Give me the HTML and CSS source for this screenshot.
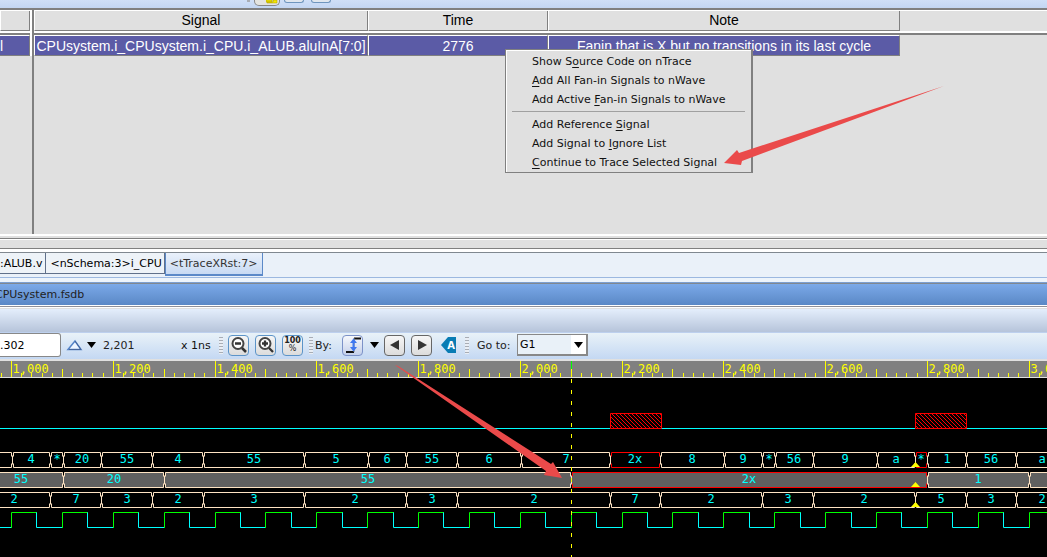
FILE: index.html
```html
<!DOCTYPE html>
<html lang="en">
<head>
  <meta charset="UTF-8" />
  <meta name="viewport" content="width=device-width, initial-scale=1.0" />
  <title>nWave - CPUsystem.fsdb</title>
  <link rel="stylesheet" href="styles.css">
</head>
<body>
  <div class="app">
    <!-- Trace results -->
    <div class="top-toolbar">
      <span class="top-grip"></span>
      <span class="top-tool gold"><svg width="12" height="4"><path d="M0 0h6v2H0zM7 0h4v3H1V2h6z" fill="#f4e800" stroke="#a89a00" stroke-width="0.5" /></svg></span>
      <span class="top-tool"></span>
      <span class="top-tool"></span>
    </div>

    <div class="results">
      <div class="pane pane-left">
        <table>
          <thead><tr><th><span class="cell"></span></th></tr></thead>
          <tbody><tr><td class="clipped">l</td></tr></tbody>
        </table>
      </div>
      <div class="pane pane-right">
        <table>
          <colgroup>
            <col class="col-signal"><col class="col-time"><col class="col-note"><col>
          </colgroup>
          <thead>
            <tr>
              <th><span class="cell">Signal</span></th>
              <th><span class="cell">Time</span></th>
              <th><span class="cell">Note</span></th>
              <th class="filler"><span class="cell"></span></th>
            </tr>
          </thead>
          <tbody>
            <tr>
              <td>CPUsystem.i_CPUsystem.i_CPU.i_ALUB.aluInA[7:0]</td>
              <td>2776</td>
              <td>Fanin that is X but no transitions in its last cycle</td>
              <td class="filler"></td>
            </tr>
          </tbody>
        </table>
      </div>

      <div class="menu">
        <button>Show S<u>o</u>urce Code on nTrace</button>
        <button><u>A</u>dd All Fan-in Signals to nWave</button>
        <button>Add Active <u>F</u>an-in Signals to nWave</button>
        <hr>
        <button>Add Reference <u>S</u>ignal</button>
        <button>Add Signal to <u>I</u>gnore List</button>
        <button><u>C</u>ontinue to Trace Selected Signal</button>
      </div>
    </div>

    <div class="splitter"></div>

    <div class="tabs">
      <button class="tab">:ALUB.v</button>
      <button class="tab">&lt;nSchema:3&gt;i_CPU</button>
      <button class="tab active">&lt;tTraceXRst:7&gt;</button>
    </div>

    <!-- nWave window -->
    <div class="titlebar">CPUsystem.fsdb</div>
    <div class="menubar"></div>

    <div class="toolbar">
      <input class="time-input" type="text" value=".302" aria-label="Cursor time" />
      <svg class="delta" width="17" height="12"><path d="M2 10.500L9 2l6 8.500z" fill="#eef5ff" stroke="#5584c8" stroke-width="1.500" /><path d="M9 2l6 8.500H3" fill="none" stroke="#46649a" /></svg>
      <svg class="caret" width="9" height="6"><path d="M0 0h9L4.500 6z" /></svg>
      <span class="delta-value">2,201</span>
      <span class="unit">x 1ns</span>
      <span class="grip"></span>
      <div class="tools">
        <button class="tool" aria-label="Zoom out">
          <svg width="18" height="18"><circle cx="8" cy="7.500" r="5.500" fill="#fff" stroke="#444" stroke-width="2" /><path d="M5 7.500h6M12 12l4 4" stroke="#333" stroke-width="2.500" /></svg>
        </button>
        <button class="tool" aria-label="Zoom in">
          <svg width="18" height="18"><circle cx="8" cy="7.500" r="5.500" fill="#fff" stroke="#444" stroke-width="2" /><path d="M5 7.500h6M8 4.500v6M12 12l4 4" stroke="#333" stroke-width="2.300" /></svg>
        </button>
        <button class="tool full" aria-label="Zoom 100%"><b>100</b><span>%</span></button>
      </div>
      <span class="grip"></span>
      <span class="by">By:</span>
      <button class="tool edge" aria-label="Any edge">
        <svg width="18" height="18"><path d="M2 16h8M10 2.500h7" stroke="#111" stroke-width="2" /><path d="M10 2v14" stroke="#777" /><path d="M9.500 6v7" stroke="#3f78f0" stroke-width="2" /><path d="M9.500 2.500L13 7H6zM9.500 15.500L13 11H6z" fill="#3f78f0" /></svg>
      </button>
      <svg class="caret by-caret" width="9" height="6"><path d="M0 0h9L4.500 6z" /></svg>
      <div class="tools">
        <button class="tool dark" aria-label="Previous edge"><svg width="10" height="10"><path d="M9 0v10L0 5z" fill="#333" /></svg></button>
        <button class="tool dark" aria-label="Next edge"><svg width="10" height="10"><path d="M1 0v10l9-5z" fill="#333" /></svg></button>
      </div>
      <button class="marker" aria-label="Marker">
        <svg width="16" height="18"><path d="M7 1h8v16H7L0 9z" fill="#087cb4" /><text x="10" y="13" text-anchor="middle">A</text></svg>
      </button>
      <span class="grip"></span>
      <label class="goto" for="goto">Go to:</label>
      <div class="select">
        <select id="goto"><option>G1</option></select>
        <svg class="caret" width="9" height="6"><path d="M0 0h9L4.500 6z" /></svg>
      </div>
    </div>

    <svg id="ruler" class="ruler"></svg>
    <svg id="wave" class="wave"></svg>

    <svg class="arrows">
      <path d="M724 163L737 150L739 153L944 86L742 161L741 165z" />
      <path d="M395 365L398 366L551 464L553 462L562 478L544 475L546 471z" />
    </svg>
  </div>

  <script src="wave.js"></script>
</body>
</html>
```

FILE: styles.css
```css
* {
  box-sizing: border-box;
}
body {
  margin: 0;
  background: #000;
  font-family: "DejaVu Sans", sans-serif;
  font-size: 11px;
  color: #222;
}
button {
  font: inherit;
  color: inherit;
  padding: 0;
}
.app {
  position: relative;
  display: flex;
  flex-direction: column;
  height: 100vh;
  overflow: hidden;
}
.app > * {
  flex-shrink: 0;
}

/* trace results */
.top-toolbar {
  display: flex;
  align-items: flex-start;
  gap: 4px;
  height: 8px;
  padding-left: 247px;
  background: linear-gradient(#cfdff7, #c3d6f2);
}
.top-grip {
  width: 3px;
  height: 2px;
  background: #a8adb5;
}
.top-tool {
  width: 20px;
  height: 3px;
  margin-right: 3px;
  background: #dfe6ee;
  border: 1px solid #6f95bd;
  border-top: none;
  border-radius: 0 0 5px 5px;
}
.top-tool.gold {
  width: 26px;
  height: 6px;
  margin-right: 0;
  padding-left: 11px;
  background: #e4e4e0;
  border: 1px solid #888;
  border-top: none;
}
.top-tool svg {
  display: block;
}
.results {
  position: relative;
  display: flex;
  height: 228px;
  background: #e0e0e0;
  border-top: 2px solid #808080;
  border-bottom: 2px solid #fff;
}
.pane-left {
  width: 34px;
  border-right: 2px solid #808080;
}
.pane-right {
  flex: 1;
}
.pane table {
  width: 100%;
  table-layout: fixed;
  border-collapse: separate;
  border-spacing: 0;
  font: 14px/18px "Liberation Sans", sans-serif;
}
.pane-left table {
  border-right: 2px solid #fff;
}
.col-signal { width: 334px; }
.col-time { width: 180px; }
.col-note { width: 352px; }
.pane th {
  padding: 0 0 2px;
  background: #fff;
  border-top: 1px solid #fff;
  border-bottom: 2px solid #808080;
  font-weight: normal;
  color: #000;
}
.cell {
  display: block;
  height: 20px;
  background: #e0e0e0;
  border-left: 1px solid #fff;
  border-right: 1px solid #808080;
  border-bottom: 1px solid #808080;
}
.filler .cell {
  border-color: #e0e0e0;
}
.pane td {
  height: 21px;
  padding: 0;
  background: #5b5ba6;
  border-top: 1px solid #fff;
  border-left: 1px solid #fff;
  border-right: 1px solid #808080;
  border-bottom: 1px solid #808080;
  color: #fff;
  text-align: center;
  white-space: nowrap;
  overflow: hidden;
}
.pane td.filler {
  background: #e0e0e0;
  border-color: #e0e0e0;
}
.pane td.clipped {
  border-left: none;
  text-align: left;
}

.menu {
  position: absolute;
  left: 505px;
  top: 39px;
  display: flex;
  flex-direction: column;
  width: 248px;
  padding: 2px 2px 0;
  background: #e0e0e0;
  border: 1px solid #808080;
  border-right-width: 2px;
  box-shadow: inset 1px 1px #fff;
}
.menu button {
  height: 19px;
  padding-left: 24px;
  background: none;
  border: none;
  text-align: left;
  color: #111;
}
.menu u {
  text-underline-offset: 2px;
}
.menu hr {
  width: calc(100% - 8px);
  margin: 2px 4px 3px;
  border: none;
  border-top: 1px solid #a0a0a0;
}

.splitter {
  height: 16px;
  background: linear-gradient(#e0e0e0 2px, #808080 2px 3px, #fff 3px 4px, #e0e0e0 4px 12px, #808080 12px 13px, #fff 13px);
}
.tabs {
  display: flex;
  align-items: flex-start;
  height: 32px;
  background: linear-gradient(#eaf1f9 24px, #9cb8e0 24px 25px, #edf4fb 25px 29px, #7c9fd0 29px 30px, #808890 30px 31px, #fff 31px);
  border-top: 1px solid #808890;
}
.tab {
  height: 21px;
  padding: 0 2px 0 4px;
  background: #eef3f8;
  border: 1px solid #60708a;
  border-top: none;
  border-left: none;
  color: #000;
}
.tab:first-child {
  padding: 0 3px 0 0;
}
.tab.active {
  height: 23px;
  padding: 0 4px;
  background: linear-gradient(#eaf1fb, #c8daf3);
  border-left: 1px solid #5b89c8;
  border-right-color: #5b89c8;
  border-bottom: 2px solid #5b89c8;
  color: #333;
}

/* nWave window */
.titlebar {
  height: 24px;
  padding-top: 1px;
  line-height: 20px;
  text-indent: -5px;
  background: linear-gradient(#7ba9e8, #5a88c6 21px, #fff 21px 22px, #909098 22px 23px, #fff 23px);
}
.menubar {
  height: 25px;
  background: linear-gradient(#e4eefc, #b6c4da);
  border-top: 1px solid #e0e0e0;
  border-bottom: 1px solid #bdd0ee;
}
.toolbar {
  display: flex;
  align-items: center;
  height: 27px;
  padding-bottom: 2px;
  background: linear-gradient(#e9f2f8, #c4d8f3);
  border-bottom: 1px solid #e0e0e0;
}
.toolbar > * {
  flex-shrink: 0;
}
.time-input {
  width: 61px;
  height: 24px;
  padding: 0;
  background: #fff;
  border: 1px solid #888;
  border-left: none;
  border-radius: 0 3px 3px 0;
  font: inherit;
  color: #000;
}
.delta {
  margin-left: 5px;
}
.caret {
  margin-left: 4px;
}
.delta-value {
  width: 78px;
  margin-left: 7px;
}
.unit {
  width: 32px;
  color: #111;
}
.grip {
  width: 4px;
  height: 17px;
  margin: 0 5px 0 6px;
  background: repeating-linear-gradient(#a8adb5 0 1px, #e9eef5 1px 3px);
}
.tools {
  display: flex;
  gap: 6px;
}
.tools + .grip {
  margin-right: 2px;
}
.tool {
  display: flex;
  flex-direction: column;
  align-items: center;
  justify-content: center;
  width: 21px;
  height: 21px;
  background: linear-gradient(#f6f6f6, #dcdcdc);
  border: 1px solid #5c94c8;
  border-radius: 4px;
}
.tool.dark {
  border-color: #666;
}
.tool.edge {
  margin-left: 7px;
  background: linear-gradient(#f6f8fc, #c4d0ea);
  border-color: #7c92c8;
}
.tool.full {
  font: 8px/8px "DejaVu Sans", sans-serif;
}
.by-caret {
  margin: 0 5px 0 7px;
}
.by {
  width: 20px;
}
.marker {
  width: 16px;
  height: 18px;
  margin-left: 9px;
  background: none;
  border: none;
}
.marker svg {
  display: block;
}
.marker text {
  font: bold 10px "DejaVu Sans", sans-serif;
  fill: #fff;
}
.marker + .grip {
  margin: 0 8px;
}
.goto {
  width: 40px;
}
.select {
  position: relative;
  width: 71px;
}
.select select {
  display: block;
  width: 100%;
  height: 22px;
  padding: 0 18px 0 2px;
  appearance: none;
  background: linear-gradient(90deg, #e9f1f8 53px, #fff 53px);
  border: 1px solid #888;
  border-right-width: 2px;
  border-bottom-width: 2px;
  border-radius: 0;
  font: inherit;
  color: #000;
}
.select .caret {
  position: absolute;
  right: 5px;
  top: 8px;
  pointer-events: none;
}

/* waveform */
.ruler {
  display: block;
  width: 100%;
  height: 18px;
  background: #808080;
  border-top: 1px solid #e0e0e0;
  border-bottom: 1px solid #e0e0e0;
}
.ruler path {
  stroke: #ffff00;
}
.ruler text,
.wave text {
  font: 12px "DejaVu Sans Mono", monospace;
}
.ruler text {
  fill: #ffff00;
}
.ruler .cursor {
  stroke: #00ff00;
}
.wave {
  display: block;
  width: 100%;
  flex: 1 1 0;
  min-height: 0;
  background: #000;
}
.wave path {
  fill: none;
  stroke: #ffe4c4;
}
.wave path.low { stroke: #00ffff; }
.wave path.high { stroke: #00ff00; }
.wave path.unknown { stroke: #ff0000; }
.wave path.hatch { fill: url(#hatch); stroke: #ff0000; }
.wave path.cursor { stroke: #ffff00; stroke-dasharray: 4 7; }
.wave path.mark { fill: #ffff00; stroke: none; }
.wave .selected { fill: #606060; }
.wave text {
  fill: #00ffff;
  text-anchor: middle;
}

.arrows {
  position: absolute;
  left: 0;
  top: 0;
  width: 100%;
  height: 100%;
  fill: #ea4a4a;
  pointer-events: none;
}
```

FILE: wave.js
```js
const ruler = document.getElementById('ruler');
const wave = document.getElementById('wave');
const CURSOR = 571;

// each segment: [end x, value]
const buses = [
  { y: 74, start: -30, segs: [[12, ''], [50, '4'], [63, '*'], [101, '20'], [152, '55'], [203, '4'], [304, '55'], [368, '5'], [406, '6'], [457, '55'], [521, '6'], [610, '7'], [660, '2x'], [724, '8'], [762, '9'], [775, '*'], [813, '56'], [877, '9'], [915, 'a'], [927, '*', true], [966, '1'], [1016, '56'], [1067, 'a']] },
  { y: 94, start: -22, selected: true, segs: [[63, '55'], [164, '20'], [571, '55'], [927, '2x'], [1029, '1'], [1130, '']] },
  { y: 114, start: -22, segs: [[50, '2'], [101, '7'], [152, '3'], [203, '2'], [304, '3'], [406, '2'], [457, '3'], [610, '2'], [660, '7'], [762, '2'], [813, '3'], [915, '2'], [966, '5'], [1016, '3'], [1067, '2']] }
];

function path(d, cls) { return `<path d="${d}" class="${cls || ''}" />`; }
function label(x, y, t) { return `<text x="${x}" y="${y}">${t}</text>`; }

function drawRuler() {
  let ticks = '', out = '';
  for (let i = -1; i <= 105; i++) {
    const x = Math.round(11 + i * 10.175) + 0.5;
    const top = i % 10 === 0 ? 0 : i % 5 === 0 ? 8 : 12;
    ticks += `M${x} ${top}V16`;
    if (i % 10 === 0) out += label(x + 1, 12, (1000 + i * 20).toLocaleString('en-US'));
  }
  ruler.innerHTML = path(ticks) + out + path(`M${CURSOR + 0.5} 0V8`, 'cursor');
}

function drawBus(bus) {
  let out = '', x = bus.start;
  const t = bus.y + 0.5, b = t + 15;
  bus.segs.forEach(([end, value, red]) => {
    const l = x + 1.5, r = end - 0.5;
    const cls = red || value === '2x' ? 'unknown' : '';
    if (bus.selected) out += `<rect x="${x + 1}" y="${bus.y}" width="${end - x - 1}" height="16" class="selected" />`;
    out += path(`M${l} ${t + 4}V${t}H${r}V${t + 4}M${l} ${b - 4}V${b}H${r}V${b - 4}`, cls);
    out += path(`M${end + 0.5} ${t + 3}V${b - 3}`);
    out += label(Math.round((x + end) / 2), bus.y + 11, value);
    x = end;
  });
  return out;
}

function drawClock() {
  let high = '', low = 'M0 149.5H11.5';
  for (let i = 0; i < 42; i++) {
    const x = Math.round(11 + i * 25.44) + 0.5;
    const next = Math.round(11 + (i + 1) * 25.44) + 0.5;
    if (i % 2 === 0) high += `M${x} 150V134.5H${next}`;
    else low += `M${x} 134V149.5H${next}`;
  }
  return path(low, 'low') + path(high, 'high');
}

function drawWave() {
  let out = '<defs><pattern id="hatch" width="4" height="4" patternUnits="userSpaceOnUse"><path class="unknown" d="M-1 -1L5 5M-1 3L1 5M3 -1L5 1" /></pattern></defs>';
  out += path('M0 50.5H610M661 50.5H915M966 50.5H4000', 'low');
  out += path('M610.5 35.5H661.5V50.5H610.5z', 'hatch');
  out += path('M915.5 35.5H966.5V50.5H915.5z', 'hatch');
  out += buses.map(drawBus).join('');
  out += drawClock();
  out += path(`M${CURSOR + 0.5} 1V1000`, 'cursor');
  [84, 104, 124].forEach(y => { out += path(`M915.5 ${y}L920 ${y + 5}H911z`, 'mark'); });
  wave.innerHTML = out;
}

drawRuler();
drawWave();
```
